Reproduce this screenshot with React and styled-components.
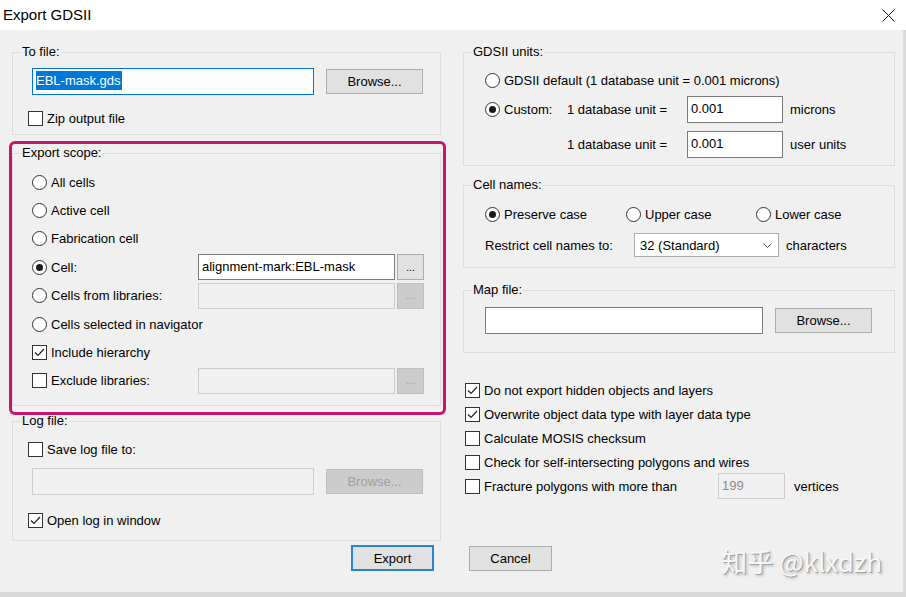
import React from 'react';
import styled, { createGlobalStyle } from 'styled-components';

const GlobalStyle = createGlobalStyle`
  * { box-sizing: border-box; }
  html, body { margin: 0; padding: 0; background: #f0f0f0; }
  body {
    font-family: "Liberation Sans", Arial, sans-serif;
    font-size: 13px;
    color: #000;
  }
`;

const Window = styled.div`
  width: 906px;
  height: 597px;
  display: flex;
  flex-direction: column;
  background: #fff;
  overflow: hidden;
`;

const TitleBar = styled.div`
  height: 30px;
  flex: none;
  display: flex;
  align-items: center;
  justify-content: space-between;
  padding: 0 11px 0 3px;
  background: #fff;
`;

const Title = styled.div`
  font-size: 15px;
  line-height: 18px;
`;

const Body = styled.div`
  position: relative;
  flex: 1;
  background: #f0f0f0;
  border-right: 3px solid #dadada;
  border-bottom: 5px solid #d9d9d9;
`;

const Columns = styled.div`
  display: grid;
  grid-template-columns: 429px 432px;
  column-gap: 22px;
  padding-left: 12px;
  align-items: start;
`;

const Column = styled.div`
  display: flex;
  flex-direction: column;
`;

const Group = styled.fieldset`
  margin: ${p => p.$mt || 0}px 0 0;
  height: ${p => p.$h}px;
  min-width: 0;
  border: 1px solid #dcdcdc;
  padding: ${p => p.$pt}px 8px 0 8px;
`;

const Legend = styled.legend`
  padding: 0 1px;
  line-height: 16px;
  font-size: 13px;
`;

const Inner = styled.div`
  margin-left: ${p => p.$ml || 0}px;
`;

const ScopeWrap = styled.div`
  position: relative;
  margin-top: 10px;
  & > fieldset { margin-top: 0; }
`;

const Highlight = styled.div`
  position: absolute;
  top: -4px;
  left: -3px;
  right: -5px;
  bottom: -9px;
  border: 3px solid #c8156c;
  border-radius: 6px;
  pointer-events: none;
  z-index: 2;
`;

const Row = styled.div`
  display: flex;
  align-items: ${p => p.$align || 'flex-start'};
  gap: ${p => p.$gap || 0}px;
  margin-top: ${p => p.$mt || 0}px;
  margin-left: ${p => p.$ml || 0}px;
  height: ${p => (p.$h ? `${p.$h}px` : 'auto')};
`;

const Field = styled.div`
  width: ${p => p.$w}px;
  height: ${p => p.$h || 27}px;
  flex: none;
  background: ${p => (p.$disabled ? '#f0f0f0' : '#fff')};
  border: 1px solid ${p => (p.$focus ? '#0078d7' : p.$disabled ? '#cccccc' : '#7a7a7a')};
  padding: 2px 3px 0;
  line-height: 19px;
  color: ${p => (p.$disabled ? '#8d8d8d' : '#000')};
  white-space: nowrap;
  overflow: hidden;
`;

const Selected = styled.span`
  display: inline-block;
  background: #0078d7;
  color: #fff;
  line-height: 19px;
  padding: 0 1px 0 0;
`;

const Button = styled.div`
  width: ${p => p.$w || 97}px;
  height: ${p => p.$h || 25}px;
  flex: none;
  margin-top: ${p => p.$mt || 0}px;
  margin-left: ${p => p.$ml || 0}px;
  display: flex;
  align-items: center;
  justify-content: center;
  background: ${p => (p.$disabled ? '#cccccc' : '#e1e1e1')};
  border: ${p => (p.$default ? '2px solid #2b83d6' : `1px solid ${p.$disabled ? '#bfbfbf' : '#adadad'}`)};
  color: ${p => (p.$disabled ? '#a0a0a0' : '#000')};
  font-size: ${p => (p.$small ? '10px' : '13px')};
`;

const Choice = styled.div`
  display: flex;
  align-items: center;
  gap: 4px;
  height: 16px;
  width: ${p => (p.$w ? `${p.$w}px` : 'auto')};
  flex: none;
  white-space: nowrap;
`;

const Box = styled.div`
  width: 15px;
  height: 15px;
  flex: none;
  border: 1px solid #333;
  background: #fff;
  display: flex;
  align-items: center;
  justify-content: center;
`;

const Circle = styled.div`
  width: 15px;
  height: 15px;
  flex: none;
  border: 1px solid #333;
  border-radius: 50%;
  background: #fff;
  display: flex;
  align-items: center;
  justify-content: center;
  &::after {
    content: '';
    display: ${p => (p.$on ? 'block' : 'none')};
    width: 7px;
    height: 7px;
    border-radius: 50%;
    background: #1a1a1a;
  }
`;

const ScopeRow = styled.div`
  display: flex;
  align-items: center;
  height: 28.4px;
`;

const UnitsGrid = styled.div`
  display: grid;
  grid-template-columns: 82px 120px 96px auto;
  grid-template-rows: 16px 27px 27px;
  row-gap: 8px;
  align-items: center;
`;

const Span = styled.div`
  grid-column: ${p => p.$col || 'auto'};
  padding-left: ${p => p.$pl || 0}px;
  white-space: nowrap;
`;

const Text = styled.div`
  width: ${p => (p.$w ? `${p.$w}px` : 'auto')};
  margin-left: ${p => p.$ml || 0}px;
  flex: none;
  white-space: nowrap;
`;

const Select = styled.div`
  width: 145px;
  height: 24px;
  flex: none;
  background: #fff;
  border: 1px solid #acacac;
  display: flex;
  align-items: center;
  justify-content: space-between;
  padding: 0 6px 0 5px;
`;

const Options = styled.div`
  display: flex;
  flex-direction: column;
  margin-top: 25px;
  padding-left: 2px;
`;

const OptionRow = styled.div`
  display: flex;
  align-items: center;
  height: 24px;
`;

const ButtonRow = styled.div`
  display: flex;
  justify-content: center;
  align-items: flex-start;
  gap: 35px;
  margin-top: 4px;
`;

const Watermark = styled.div`
  position: absolute;
  right: 21px;
  bottom: 16px;
  font-family: "Noto Sans CJK SC", "Noto Sans", sans-serif;
  font-size: 26px;
  line-height: 30px;
  color: #f7f7f7;
  text-shadow: 1px 1px 0 #a3a3a3, 2px 2px 3px rgba(0, 0, 0, 0.25);
  white-space: nowrap;
`;

const Check = () => (
  <svg width="11" height="9" viewBox="0 0 11 9">
    <polyline points="1,4.5 4,7.5 10,1" fill="none" stroke="#222" strokeWidth="1.2" />
  </svg>
);

const CheckBox = ({ on, label, w }) => (
  <Choice $w={w}>
    <Box>{on && <Check />}</Box>
    {label}
  </Choice>
);

const Radio = ({ on, label, w }) => (
  <Choice $w={w}>
    <Circle $on={on} />
    {label}
  </Choice>
);

const Close = () => (
  <svg width="13" height="13" viewBox="0 0 13 13">
    <path d="M0.5 0.5 L12.5 12.5 M12.5 0.5 L0.5 12.5" stroke="#111" strokeWidth="1" />
  </svg>
);

const Chevron = () => (
  <svg width="9" height="5" viewBox="0 0 9 5">
    <polyline points="0.5,0.5 4.5,4.5 8.5,0.5" fill="none" stroke="#555" strokeWidth="1" />
  </svg>
);

const scopeRows = [
  { type: 'radio', label: 'All cells' },
  { type: 'radio', label: 'Active cell' },
  { type: 'radio', label: 'Fabrication cell' },
  { type: 'radio', label: 'Cell:', on: true, field: 'alignment-mark:EBL-mask' },
  { type: 'radio', label: 'Cells from libraries:', field: '', disabled: true },
  { type: 'radio', label: 'Cells selected in navigator' },
  { type: 'check', label: 'Include hierarchy', on: true },
  { type: 'check', label: 'Exclude libraries:', field: '', disabled: true },
];

const options = [
  { label: 'Do not export hidden objects and layers', on: true },
  { label: 'Overwrite object data type with layer data type', on: true },
  { label: 'Calculate MOSIS checksum' },
  { label: 'Check for self-intersecting polygons and wires' },
];

export default function App() {
  return (
    <>
      <GlobalStyle />
      <Window>
        <TitleBar>
          <Title>Export GDSII</Title>
          <Close />
        </TitleBar>
        <Body>
          <Columns>
            <Column>
              <Group $mt={14} $h={91} $pt={8}>
                <Legend>To file:</Legend>
                <Row $gap={12} $ml={11}>
                  <Field $w={282} $focus>
                    <Selected>EBL-mask.gds</Selected>
                  </Field>
                  <Button $mt={1}>Browse...</Button>
                </Row>
                <Row $mt={15} $ml={7}>
                  <CheckBox label="Zip output file" />
                </Row>
              </Group>

              <ScopeWrap>
                <Highlight />
                <Group $h={261} $pt={7}>
                  <Legend>Export scope:</Legend>
                  <Inner $ml={11}>
                    {scopeRows.map(r => (
                      <ScopeRow key={r.label}>
                        {r.type === 'radio' ? (
                          <Radio on={r.on} label={r.label} w={166} />
                        ) : (
                          <CheckBox on={r.on} label={r.label} w={166} />
                        )}
                        {r.field !== undefined && (
                          <>
                            <Field $w={197} $h={26} $disabled={r.disabled}>{r.field}</Field>
                            <Button $w={27} $h={26} $ml={2} $small $disabled={r.disabled}>...</Button>
                          </>
                        )}
                      </ScopeRow>
                    ))}
                  </Inner>
                </Group>
              </ScopeWrap>

              <Group $mt={7} $h={128} $pt={12}>
                <Legend>Log file:</Legend>
                <Row $ml={7}>
                  <CheckBox label="Save log file to:" />
                </Row>
                <Row $gap={12} $mt={11} $ml={11}>
                  <Field $w={282} $disabled />
                  <Button $mt={1} $disabled>Browse...</Button>
                </Row>
                <Row $mt={17} $ml={7}>
                  <CheckBox on label="Open log in window" />
                </Row>
              </Group>
            </Column>

            <Column>
              <Group $mt={14} $h={122} $pt={12}>
                <Legend>GDSII units:</Legend>
                <Inner $ml={13}>
                  <UnitsGrid>
                    <Span $col="1 / 5">
                      <Radio label="GDSII default (1 database unit = 0.001 microns)" />
                    </Span>
                    <Radio on label="Custom:" />
                    <Span>1 database unit =</Span>
                    <Field $w={96}>0.001</Field>
                    <Span $pl={7}>microns</Span>
                    <Span $col="2">1 database unit =</Span>
                    <Field $w={96}>0.001</Field>
                    <Span $pl={7}>user units</Span>
                  </UnitsGrid>
                </Inner>
              </Group>

              <Group $mt={11} $h={91} $pt={13}>
                <Legend>Cell names:</Legend>
                <Inner $ml={13}>
                  <Row>
                    <Radio on label="Preserve case" w={141} />
                    <Radio label="Upper case" w={130} />
                    <Radio label="Lower case" />
                  </Row>
                  <Row $align="center" $mt={11}>
                    <Text $w={149}>Restrict cell names to:</Text>
                    <Select>
                      <span>32 (Standard)</span>
                      <Chevron />
                    </Select>
                    <Text $ml={7}>characters</Text>
                  </Row>
                </Inner>
              </Group>

              <Group $mt={14} $h={71} $pt={9}>
                <Legend>Map file:</Legend>
                <Row $gap={12} $ml={13}>
                  <Field $w={278} />
                  <Button $mt={1}>Browse...</Button>
                </Row>
              </Group>

              <Options>
                {options.map(o => (
                  <OptionRow key={o.label}>
                    <CheckBox on={o.on} label={o.label} />
                  </OptionRow>
                ))}
                <OptionRow>
                  <CheckBox label="Fracture polygons with more than" w={253} />
                  <Field $w={67} $h={26} $disabled>199</Field>
                  <Text $ml={9}>vertices</Text>
                </OptionRow>
              </Options>
            </Column>
          </Columns>

          <ButtonRow>
            <Button $w={83} $h={26} $default>Export</Button>
            <Button $w={83} $mt={1}>Cancel</Button>
          </ButtonRow>

          <Watermark>知乎 @klxdzh</Watermark>
        </Body>
      </Window>
    </>
  );
}
